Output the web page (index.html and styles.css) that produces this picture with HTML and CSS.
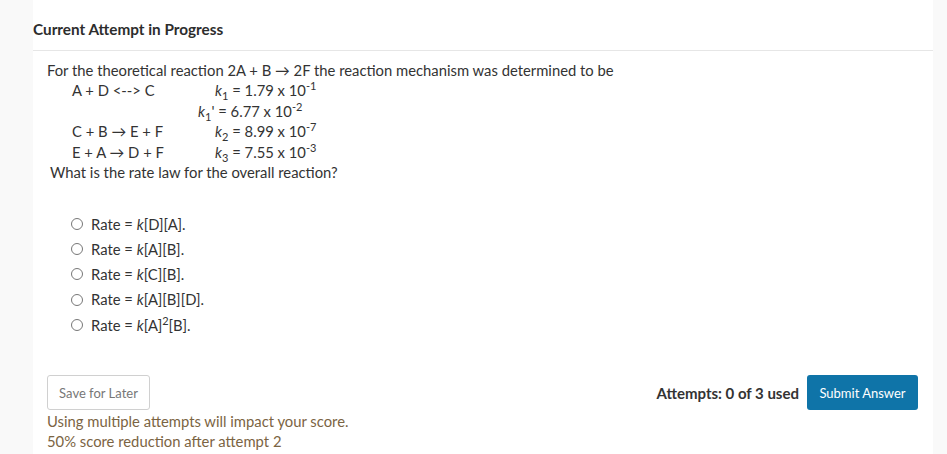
FILE: index.html
```html
<!DOCTYPE html>
<html lang="en">
<head>
  <meta charset="UTF-8">
  <title>Current Attempt in Progress</title>
  <link rel="stylesheet" href="styles.css">
</head>
<body>
  <div class="panel">
    <div class="panel-header">Current Attempt in Progress</div>

    <div class="question">
      <p class="intro">For the theoretical reaction 2A + B &rarr; 2F the reaction mechanism was determined to be</p>
      <div class="mechanism">
        <span>A + D &lt;--&gt; C</span>
        <span><i>k</i><sub>1</sub> = 1.79 x 10<sup>-1</sup></span>
        <span></span>
        <span class="reverse"><i>k</i><sub>1</sub>' = 6.77 x 10<sup>-2</sup></span>
        <span>C + B &rarr; E + F</span>
        <span><i>k</i><sub>2</sub> = 8.99 x 10<sup>-7</sup></span>
        <span>E + A &rarr; D + F</span>
        <span><i>k</i><sub>3</sub> = 7.55 x 10<sup>-3</sup></span>
      </div>
      <p class="ask">What is the rate law for the overall reaction?</p>

      <ul class="options">
        <li><span class="radio"></span><span>Rate = <i>k</i>[D][A].</span></li>
        <li><span class="radio"></span><span>Rate = <i>k</i>[A][B].</span></li>
        <li><span class="radio"></span><span>Rate = <i>k</i>[C][B].</span></li>
        <li><span class="radio"></span><span>Rate = <i>k</i>[A][B][D].</span></li>
        <li><span class="radio"></span><span>Rate = <i>k</i>[A]<sup>2</sup>[B].</span></li>
      </ul>
    </div>

    <div class="actions">
      <button class="btn-save">Save for Later</button>
      <div class="submit-group">
        <span class="attempts">Attempts: 0 of 3 used</span>
        <button class="btn-submit">Submit Answer</button>
      </div>
    </div>

    <div class="notes">
      <p>Using multiple attempts will impact your score.</p>
      <p>50% score reduction after attempt 2</p>
    </div>
  </div>
</body>
</html>
```

FILE: styles.css
```css
body {
  margin: 0;
  background: #f9f9f9;
  font-family: Lato, "Open Sans", sans-serif;
  color: #333;
}

.panel {
  margin-left: 33px;
  width: 900px;
  height: 454px;
  background: #fff;
}

/* Header */
.panel-header {
  height: 51px;
  box-sizing: border-box;
  padding: 20px 0 0 0;
  font-size: 15.3px;
  font-weight: bold;
  color: #2d2d2d;
  border-bottom: 1px solid #e6e6e6;
}

/* Question body */
.question {
  padding: 9px 14px 0;
  font-size: 14.8px;
  line-height: 20.4px;
}

.question p {
  margin: 0;
}

.mechanism {
  display: grid;
  grid-template-columns: 143px 140px;
  padding-left: 25px;
}

.mechanism .reverse {
  margin-left: -17px;
}

sub, sup {
  font-size: 11px;
  line-height: 0;
}

.ask {
  padding-left: 3px;
}

/* Options */
.options {
  list-style: none;
  margin: 29px 0 0;
  padding: 0 0 0 24px;
}

.options li {
  display: flex;
  align-items: center;
  height: 25.2px;
}

.radio {
  width: 10px;
  height: 10px;
  border: 1px solid #777;
  border-radius: 50%;
  margin-right: 8px;
}

/* Actions */
.actions {
  display: flex;
  justify-content: space-between;
  align-items: center;
  margin-top: 38px;
  padding: 0 15px 0 14px;
}

.btn-save {
  background: #fff;
  border: 1px solid #d0d0d0;
  border-radius: 3px;
  height: 35px;
  width: 103px;
  font-family: inherit;
  font-size: 13px;
  color: #777;
}

.submit-group {
  display: flex;
  align-items: center;
  gap: 8px;
}

.attempts {
  font-size: 15px;
  font-weight: bold;
  color: #333;
}

.btn-submit {
  background: #0f74a8;
  border: none;
  border-radius: 3px;
  height: 35px;
  width: 111px;
  font-family: inherit;
  font-size: 13px;
  color: #fff;
}

.notes {
  padding: 1px 14px 0;
  font-size: 14.8px;
  line-height: 20px;
  color: #7b6443;
}

.notes p {
  margin: 0;
}
```
